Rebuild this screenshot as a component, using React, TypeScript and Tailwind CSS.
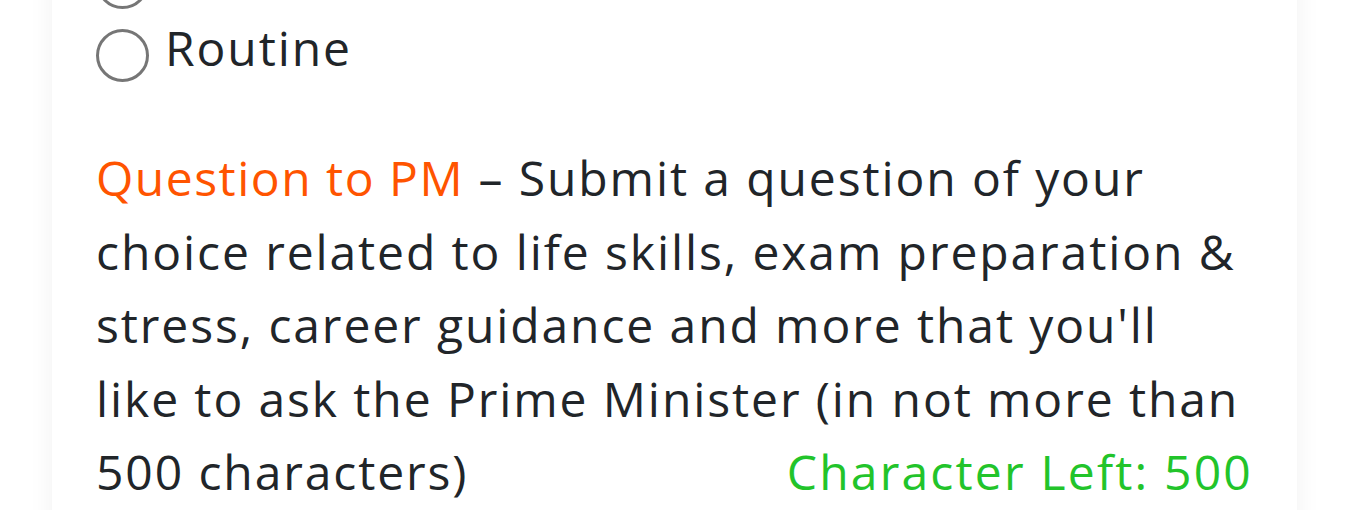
import React from "react";

const Radio: React.FC<{ label: string }> = ({ label }) => (
  <label className="flex items-center h-[73px] gap-[16px]">
    <span className="w-[53px] h-[53px] rounded-full border-[3px] border-[#767676] bg-white shrink-0" />
    <span className="pb-[16px]">{label}</span>
  </label>
);

const App: React.FC = () => {
  return (
    <div
      className="h-[510px] bg-white overflow-hidden text-[#212529]"
      style={{ fontFamily: '"Open Sans", "Liberation Sans", sans-serif' }}
    >
      <div className="ml-[52px] w-[1245px] -mt-[54px] bg-white shadow-[0_0_24px_rgba(0,0,0,0.06)] px-[44px] pb-10 tracking-[1.9px]">
        <div className="text-[48px] leading-none">
          <Radio label="Emotional" />
          <Radio label="Routine" />
        </div>
        <p className="mt-[49px] text-[48px] leading-[73.5px]">
          <span className="text-[#ff5400] font-medium tracking-[1.5px]">Question to PM</span> – Submit a question of your
          <br />
          choice related to life skills, exam preparation &amp;
          <br />
          stress, career guidance and more that you'll
          <br />
          like to ask the Prime Minister (in not more than
          <br />
          500 characters)
          <span className="float-right text-[#22c42a] tracking-[2.2px]">Character Left: 500</span>
        </p>
      </div>
    </div>
  );
};

export default App;
